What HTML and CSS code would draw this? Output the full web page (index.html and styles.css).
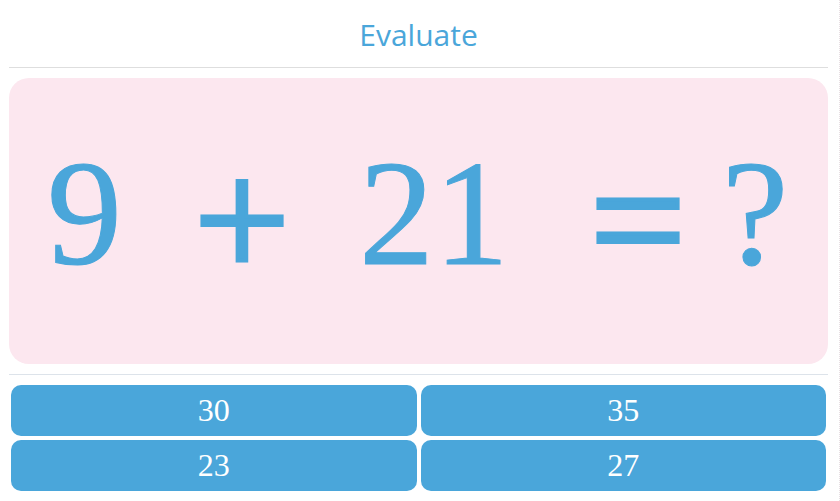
FILE: index.html
```html
<!DOCTYPE html>
<html lang="en">
<head>
<meta charset="utf-8">
<title>Evaluate</title>
<link rel="stylesheet" href="styles.css">
</head>
<body>
<div class="app">
  <header class="title-bar">
    <h1 class="title">Evaluate</h1>
  </header>
  <section class="question">
    <div class="equation">
      <span class="tok t-nine">9</span>
      <span class="tok op t-plus">+</span>
      <span class="tok t-num">21</span>
      <span class="tok op t-eq">=</span>
      <span class="tok t-q">?</span>
    </div>
  </section>
  <div class="answers">
    <button class="answer">30</button>
    <button class="answer">35</button>
    <button class="answer">23</button>
    <button class="answer">27</button>
  </div>
</div>
</body>
</html>
```
FILE: styles.css
```css
html, body {
  margin: 0;
  padding: 0;
  background: #ffffff;
}
body {
  width: 840px;
  height: 501px;
  overflow: hidden;
  box-sizing: border-box;
  border-right: 1px dotted #e8dfe3;
}
.app {
  padding: 0 11px 0 9px;
  display: flex;
  flex-direction: column;
}
.title-bar {
  height: 67px;
  border-bottom: 1px solid #dedede;
  display: flex;
  align-items: center;
  justify-content: center;
}
.title {
  margin: 0;
  padding-top: 2px;
  font-family: "Open Sans", "Noto Sans", sans-serif;
  font-weight: 400;
  font-size: 30px;
  color: #4aa6da;
}
.question {
  margin-top: 10px;
  height: 286px;
  background: #fce7ef;
  border-radius: 20px;
  display: flex;
  align-items: center;
}
.equation {
  display: flex;
  align-items: baseline;
  font-family: "Liberation Serif", "Times New Roman", serif;
  font-size: 150px;
  line-height: 1;
  color: #4aa6da;
  -webkit-text-stroke: 1px #4aa6da;
  padding-left: 38px;
  margin-top: -28px;
}
.op {
  font-size: 170px;
  -webkit-text-stroke: 4px #4aa6da;
  transform: translateY(13px);
}
.t-plus { margin-left: 72px; }
.t-num { margin-left: 69px; }
.t-eq { margin-left: 81px; }
.t-q { margin-left: 36px; }
.answers {
  margin-top: 10px;
  border-top: 1px solid #dde3ea;
  padding: 10px 2px 0 2px;
  display: grid;
  grid-template-columns: 1fr 1fr;
  gap: 4px;
}
.answer {
  height: 51px;
  border: none;
  border-radius: 10px;
  background: #4aa6da;
  color: #ffffff;
  font-family: "Liberation Serif", "Times New Roman", serif;
  font-size: 32px;
  padding: 0;
  margin: 0;
}
```
